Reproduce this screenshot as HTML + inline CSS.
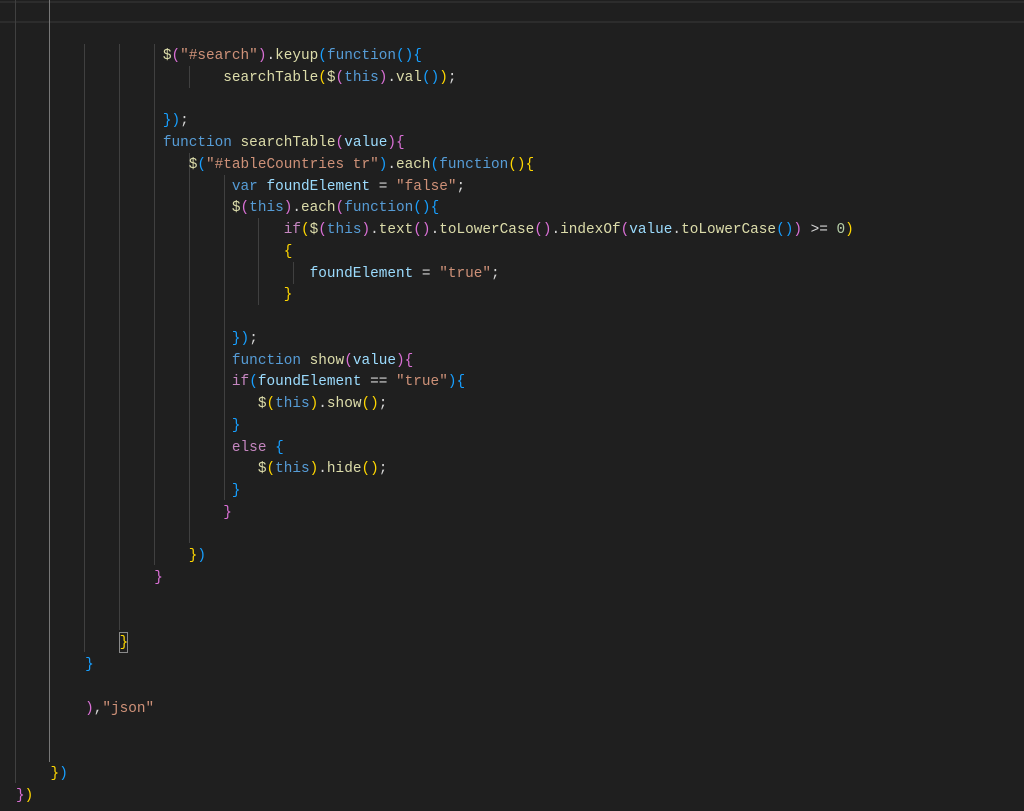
<!DOCTYPE html>
<html><head><meta charset="utf-8"><style>
html,body{margin:0;padding:0;background:#1f1f1f;width:1024px;height:811px;overflow:hidden;position:relative}
.hl{position:absolute;left:0;width:1024px;height:1px;background:#2c2c2c}
.g{position:absolute;width:1px;background:#404040}
.code{position:absolute;left:0;top:46px;font-family:"Liberation Mono",monospace;font-size:14.4px;line-height:21.75px;color:#d4d4d4}
.l{height:21.75px;white-space:pre}
.y{color:#dcdcaa}.s{color:#ce9178}.k{color:#569cd6}.v{color:#9cdcfe}.c{color:#c586c0}
.G{color:#ffd700}.P{color:#da70d6}.B{color:#179fff}.n{color:#b5cea8}
.box{position:absolute;left:119px;top:632px;width:7px;height:19px;border:1px solid #8a8a8a}
</style></head><body>
<div class="hl" style="top:1px;height:2px"></div>
<div class="hl" style="top:21px;height:2px"></div>
<div class="g" style="left:15px;top:0;height:783px"></div>
<div class="g" style="left:49px;top:0;height:762px;background:#777"></div>
<div class="g" style="left:84px;top:44px;height:608px"></div>
<div class="g" style="left:119px;top:44px;height:586px"></div>
<div class="g" style="left:154px;top:44px;height:521px"></div>
<div class="g" style="left:189px;top:66px;height:22px"></div>
<div class="g" style="left:189px;top:153px;height:390px"></div>
<div class="g" style="left:224px;top:175px;height:325px"></div>
<div class="g" style="left:258px;top:218px;height:87px"></div>
<div class="g" style="left:293px;top:262px;height:22px"></div>
<div class="box"></div>
<div class="code" style="left:16px"><div class="l">                 <span class="y">$</span><span class="P">(</span><span class="s">"#search"</span><span class="P">)</span>.<span class="y">keyup</span><span class="B">(</span><span class="k">function</span><span class="B">(){</span></div><div class="l">                        <span class="y">searchTable</span><span class="G">(</span><span class="y">$</span><span class="P">(</span><span class="k">this</span><span class="P">)</span>.<span class="y">val</span><span class="B">()</span><span class="G">)</span>;</div><div class="l"> </div><div class="l">                 <span class="B">})</span>;</div><div class="l">                 <span class="k">function</span> <span class="y">searchTable</span><span class="P">(</span><span class="v">value</span><span class="P">){</span></div><div class="l">                    <span class="y">$</span><span class="B">(</span><span class="s">"#tableCountries tr"</span><span class="B">)</span>.<span class="y">each</span><span class="B">(</span><span class="k">function</span><span class="G">(){</span></div><div class="l">                         <span class="k">var</span> <span class="v">foundElement</span> = <span class="s">"false"</span>;</div><div class="l">                         <span class="y">$</span><span class="P">(</span><span class="k">this</span><span class="P">)</span>.<span class="y">each</span><span class="P">(</span><span class="k">function</span><span class="B">(){</span></div><div class="l">                               <span class="c">if</span><span class="G">(</span><span class="y">$</span><span class="P">(</span><span class="k">this</span><span class="P">)</span>.<span class="y">text</span><span class="P">()</span>.<span class="y">toLowerCase</span><span class="P">()</span>.<span class="y">indexOf</span><span class="P">(</span><span class="v">value</span>.<span class="y">toLowerCase</span><span class="B">()</span><span class="P">)</span> &gt;= <span class="n">0</span><span class="G">)</span></div><div class="l">                               <span class="G">{</span></div><div class="l">                                  <span class="v">foundElement</span> = <span class="s">"true"</span>;</div><div class="l">                               <span class="G">}</span></div><div class="l"> </div><div class="l">                         <span class="B">})</span>;</div><div class="l">                         <span class="k">function</span> <span class="y">show</span><span class="P">(</span><span class="v">value</span><span class="P">){</span></div><div class="l">                         <span class="c">if</span><span class="B">(</span><span class="v">foundElement</span> == <span class="s">"true"</span><span class="B">){</span></div><div class="l">                            <span class="y">$</span><span class="G">(</span><span class="k">this</span><span class="G">)</span>.<span class="y">show</span><span class="G">()</span>;</div><div class="l">                         <span class="B">}</span></div><div class="l">                         <span class="c">else</span> <span class="B">{</span></div><div class="l">                            <span class="y">$</span><span class="G">(</span><span class="k">this</span><span class="G">)</span>.<span class="y">hide</span><span class="G">()</span>;</div><div class="l">                         <span class="B">}</span></div><div class="l">                        <span class="P">}</span></div><div class="l"> </div><div class="l">                    <span class="G">}</span><span class="B">)</span></div><div class="l">                <span class="P">}</span></div><div class="l"> </div><div class="l"> </div><div class="l">            <span class="G">}</span></div><div class="l">        <span class="B">}</span></div><div class="l"> </div><div class="l">        <span class="P">)</span>,<span class="s">"json"</span></div><div class="l"> </div><div class="l"> </div><div class="l">    <span class="G">}</span><span class="B">)</span></div><div class="l"><span class="P">}</span><span class="G">)</span></div></div>
</body></html>
